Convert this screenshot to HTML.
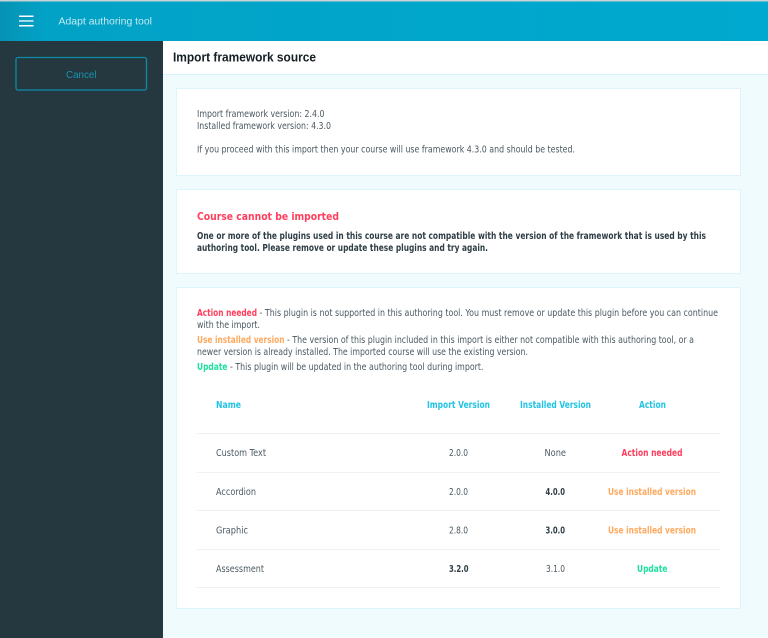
<!DOCTYPE html>
<html>
<head>
<meta charset="utf-8">
<style>
html,body{margin:0;padding:0;width:768px;height:638px;overflow:hidden;background:#f0fbfe}
svg{display:block}
text{font-family:"DejaVu Sans",sans-serif;font-size:9.3px;fill:#4a5961}
.b{font-weight:bold}
.d{fill:#2f3e46}
.r{fill:#ff3d5c}
.o{fill:#ffa95e}
.g{fill:#20e0a0}
.h{fill:#22c4e4}
.ra{font-family:"Liberation Sans",sans-serif}
</style>
</head>
<body>
<svg width="768" height="638" viewBox="0 0 768 638" xmlns="http://www.w3.org/2000/svg">
<defs>
<linearGradient id="hd" x1="0" x2="1" y1="0" y2="0">
<stop offset="0" stop-color="#0593b5"/><stop offset="0.06" stop-color="#02a2c6"/><stop offset="1" stop-color="#00a9cf"/>
</linearGradient>
</defs>
<rect width="768" height="638" fill="#f0fbfe"/>
<rect x="0" y="0" width="768" height="1.5" fill="#c9d3d6"/>
<rect x="0" y="1.5" width="768" height="39.5" fill="url(#hd)"/>
<rect x="0" y="41" width="163" height="597" fill="#25383f"/>
<rect x="163" y="41" width="605" height="33" fill="#fff"/>
<rect x="163" y="74" width="605" height="1" fill="#d8f3fa"/>

<rect x="19" y="15.5" width="14.5" height="1.5" fill="#fff"/>
<rect x="19" y="20.2" width="14.5" height="1.5" fill="#fff" opacity=".85"/>
<rect x="19" y="25" width="14.5" height="1.5" fill="#fff"/>
<text class="ra" x="58.5" y="24.5" textLength="93.5" lengthAdjust="spacingAndGlyphs" style="font-size:10.5px;fill:#c4e9f2">Adapt authoring tool</text>

<rect x="16" y="57.5" width="130.5" height="32.5" rx="2" fill="none" stroke="#0f8aa6" stroke-width="1.3"/>
<text class="ra" x="66" y="78" textLength="30.5" lengthAdjust="spacingAndGlyphs" style="font-size:10.5px;fill:#1495b2">Cancel</text>

<text class="ra b" x="173" y="61.5" textLength="143" lengthAdjust="spacingAndGlyphs" style="font-size:13px;fill:#141f24">Import framework source</text>

<rect x="176.5" y="88.5" width="564" height="87" fill="#fff" stroke="#dff5fb"/>
<rect x="176.5" y="189.5" width="564" height="84" fill="#fff" stroke="#dff5fb"/>
<rect x="176.5" y="287.5" width="564" height="321" fill="#fff" stroke="#dff5fb"/>

<text x="197" y="117" textLength="127.5" lengthAdjust="spacingAndGlyphs">Import framework version: 2.4.0</text>
<text x="197" y="129" textLength="134" lengthAdjust="spacingAndGlyphs">Installed framework version: 4.3.0</text>
<text x="197" y="152.5" textLength="378" lengthAdjust="spacingAndGlyphs">If you proceed with this import then your course will use framework 4.3.0 and should be tested.</text>

<text class="b r" x="197" y="220" textLength="142" lengthAdjust="spacingAndGlyphs" style="font-size:11px">Course cannot be imported</text>
<text class="b d" x="197" y="239" textLength="509" lengthAdjust="spacingAndGlyphs">One or more of the plugins used in this course are not compatible with the version of the framework that is used by this</text>
<text class="b d" x="197" y="251" textLength="291" lengthAdjust="spacingAndGlyphs">authoring tool. Please remove or update these plugins and try again.</text>

<text class="b r" x="197" y="316" textLength="60" lengthAdjust="spacingAndGlyphs">Action needed</text>
<text x="259.5" y="316" textLength="458.5" lengthAdjust="spacingAndGlyphs">- This plugin is not supported in this authoring tool. You must remove or update this plugin before you can continue</text>
<text x="197" y="328" textLength="63" lengthAdjust="spacingAndGlyphs">with the import.</text>
<text class="b o" x="197" y="343" textLength="87.5" lengthAdjust="spacingAndGlyphs">Use installed version</text>
<text x="287" y="343" textLength="407" lengthAdjust="spacingAndGlyphs">- The version of this plugin included in this import is either not compatible with this authoring tool, or a</text>
<text x="197" y="355" textLength="331" lengthAdjust="spacingAndGlyphs">newer version is already installed. The imported course will use the existing version.</text>
<text class="b g" x="197" y="370" textLength="30.5" lengthAdjust="spacingAndGlyphs">Update</text>
<text x="230" y="370" textLength="253.5" lengthAdjust="spacingAndGlyphs">- This plugin will be updated in the authoring tool during import.</text>

<text class="b h" x="216" y="408" textLength="25" lengthAdjust="spacingAndGlyphs">Name</text>
<text class="b h" x="427" y="408" textLength="63" lengthAdjust="spacingAndGlyphs">Import Version</text>
<text class="b h" x="520" y="408" textLength="71" lengthAdjust="spacingAndGlyphs">Installed Version</text>
<text class="b h" x="639" y="408" textLength="27" lengthAdjust="spacingAndGlyphs">Action</text>

<rect x="197" y="433" width="523" height="1" fill="#eff2f3"/>
<rect x="197" y="472" width="523" height="1" fill="#eff2f3"/>
<rect x="197" y="510" width="523" height="1" fill="#eff2f3"/>
<rect x="197" y="549" width="523" height="1" fill="#eff2f3"/>
<rect x="197" y="587" width="523" height="1" fill="#eff2f3"/>

<text x="216" y="456" textLength="50" lengthAdjust="spacingAndGlyphs">Custom Text</text>
<text x="449" y="456" textLength="19" lengthAdjust="spacingAndGlyphs">2.0.0</text>
<text x="544.5" y="456" textLength="21.5" lengthAdjust="spacingAndGlyphs">None</text>
<text class="b r" x="621.5" y="456" textLength="61" lengthAdjust="spacingAndGlyphs">Action needed</text>

<text x="216" y="495" textLength="40" lengthAdjust="spacingAndGlyphs">Accordion</text>
<text x="449" y="495" textLength="19" lengthAdjust="spacingAndGlyphs">2.0.0</text>
<text class="b d" x="545.5" y="495" textLength="19.5" lengthAdjust="spacingAndGlyphs">4.0.0</text>
<text class="b o" x="608" y="495" textLength="88" lengthAdjust="spacingAndGlyphs">Use installed version</text>

<text x="216" y="533.5" textLength="32" lengthAdjust="spacingAndGlyphs">Graphic</text>
<text x="449" y="533.5" textLength="19" lengthAdjust="spacingAndGlyphs">2.8.0</text>
<text class="b d" x="545.5" y="533.5" textLength="19.5" lengthAdjust="spacingAndGlyphs">3.0.0</text>
<text class="b o" x="608" y="533.5" textLength="88" lengthAdjust="spacingAndGlyphs">Use installed version</text>

<text x="216" y="572" textLength="48" lengthAdjust="spacingAndGlyphs">Assessment</text>
<text class="b d" x="449" y="572" textLength="19.5" lengthAdjust="spacingAndGlyphs">3.2.0</text>
<text x="546" y="572" textLength="19" lengthAdjust="spacingAndGlyphs">3.1.0</text>
<text class="b g" x="637" y="572" textLength="30.5" lengthAdjust="spacingAndGlyphs">Update</text>
</svg>
</body>
</html>
